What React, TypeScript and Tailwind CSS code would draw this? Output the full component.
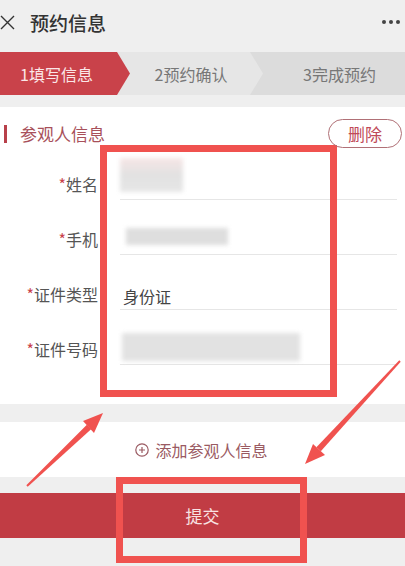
import React from "react";

const font = { fontFamily: '"Noto Sans CJK SC", "Noto Sans", sans-serif' };

const rows = [
  { label: "姓名", kind: "name" },
  { label: "手机", kind: "phone" },
  { label: "证件类型", kind: "type" },
  { label: "证件号码", kind: "id" },
];

function FieldValue({ kind }: { kind: string }) {
  if (kind === "name") {
    return (
      <div className="mb-[7px] h-[34px] w-[63px] bg-gradient-to-b from-[#f6e6e6] via-[#e2e2e2] to-[#e6e6e6] blur-[2px]" />
    );
  }
  if (kind === "phone") {
    return <div className="mb-[9px] ml-[6px] h-[17px] w-[102px] bg-[#dedede] blur-[2px]" />;
  }
  if (kind === "type") {
    return <span className="pb-[1px] pl-[3px] text-[16px] leading-[24px] text-[#444]">身份证</span>;
  }
  return <div className="mb-[3px] ml-[2px] h-[28px] w-[178px] bg-[#e2e2e2] blur-[2px]" />;
}

export default function App() {
  return (
    <div className="relative h-[566px] w-[405px] overflow-hidden bg-[#efefef]" style={font}>
      {/* top bar */}
      <header className="flex h-[52px] items-center pb-[8px] pr-[5px]">
        <svg width="15" height="15" viewBox="0 0 15 15">
          <path d="M1 1 L14 14 M14 1 L1 14" stroke="#333" strokeWidth="1.4" />
        </svg>
        <h1 className="ml-[15px] text-[19px] font-medium leading-none text-[#333]">预约信息</h1>
        <div className="ml-auto flex gap-[3px]">
          <span className="size-[4px] rounded-full bg-[#444]" />
          <span className="size-[4px] rounded-full bg-[#444]" />
          <span className="size-[4px] rounded-full bg-[#444]" />
        </div>
      </header>

      {/* steps */}
      <div className="flex h-[43px] bg-[#dcdcdc]">
        <div className="relative z-20 flex w-[130px] items-center bg-[#c9424a] pl-[20px] text-[16px] text-[#fbe6e7] [clip-path:polygon(0_0,117px_0,130px_50%,117px_100%,0_100%)]">
          1填写信息
        </div>
        <div className="relative z-10 -ml-[13px] flex w-[146px] items-center justify-center bg-[#e6e6e6] pl-[2px] text-[16px] text-[#777] [clip-path:polygon(0_0,133px_0,146px_50%,133px_100%,0_100%)]">
          2预约确认
        </div>
        <div className="flex flex-1 items-center pl-[40px] text-[16px] text-[#777]">3完成预约</div>
      </div>

      <div className="h-[12px]" />

      {/* form */}
      <section className="h-[297px] bg-white">
        <div className="flex h-[38px] items-start pr-[3px] pt-[12px]">
          <div className="relative z-10 flex h-[29px] flex-1 items-center">
            <span className="ml-[4px] h-[18px] w-[3px] bg-[#b8404a]" />
            <span className="ml-[13px] text-[17px] text-[#a8505a]">参观人信息</span>
            <button className="ml-auto flex h-[29px] w-[74px] items-center justify-center rounded-full border-[1.5px] border-[#b07076] text-[17px] text-[#c04a58]">
              删除
            </button>
          </div>
        </div>
        {rows.map((r) => (
          <div key={r.label} className="flex h-[55px]">
            <div className="w-[98px] self-end pb-[4px] text-right text-[16px] leading-[24px] text-[#555]">
              <span className="text-[#c9424a]">*</span>
              {r.label}
            </div>
            <div className="ml-[22px] flex w-[277px] items-end border-b border-[#e6e6e6]">
              <FieldValue kind={r.kind} />
            </div>
          </div>
        ))}
      </section>

      <div className="h-[18px]" />

      {/* add visitor */}
      <div className="flex h-[55px] items-center justify-center gap-[6px] bg-white pr-[2px] text-[16px] text-[#9a5a62]">
        <svg width="14" height="14" viewBox="0 0 14 14">
          <circle cx="7" cy="7" r="6.2" fill="none" stroke="#9a5a62" strokeWidth="1.2" />
          <path d="M7 4 V10 M4 7 H10" stroke="#9a5a62" strokeWidth="1.2" />
        </svg>
        添加参观人信息
      </div>

      <div className="h-[16px]" />

      <button className="flex h-[45px] w-full items-center justify-center bg-[#c13c44] text-[17px] text-[#f8e2e2]">
        提交
      </button>

      {/* annotations */}
      <div className="absolute left-[100px] top-[145px] h-[252px] w-[237px] border-[7px] border-[#f0524f]" />
      <div className="absolute left-[116px] top-[477px] h-[86px] w-[191px] border-[7px] border-[#f0524f]" />
      <svg className="pointer-events-none absolute inset-0" width="405" height="566">
        <polygon points="26.3,485.3 27.7,486.7 91.1,429.2 86.9,424.8" fill="#f0524f" />
        <polygon points="103,413 94,433 83,421" fill="#f0524f" />
        <polygon points="399.3,360.3 400.7,361.7 320.8,451.3 316.4,447.3" fill="#f0524f" />
        <polygon points="305,464 325,455 313,444" fill="#f0524f" />
      </svg>
    </div>
  );
}
